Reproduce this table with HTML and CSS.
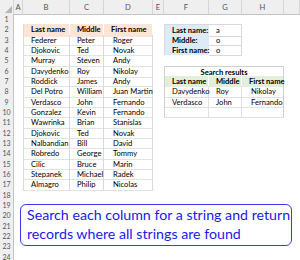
FILE: index.html
```html
<!DOCTYPE html>
<html>
<head>
<meta charset="utf-8">
<link rel="stylesheet" href="styles.css">
</head>
<body>
<div class="sheet">
  <div class="row hdr">
    <span class="corner"><svg width="7" height="7" viewBox="0 0 7 7"><path d="M7 0V7H0Z" fill="#b4b4b4"/></svg></span>
    <span>A</span><span>B</span><span>C</span><span>D</span><span>E</span><span>F</span><span>G</span><span>H</span><span></span>
  </div>
  <div class="row"><span class="rn">1</span><span></span><span></span><span></span><span></span><span></span><span></span><span></span><span></span><span></span></div>
  <div class="row"><span class="rn">2</span><span></span><span class="th first">Last name</span><span class="th">Middle</span><span class="th">First name</span><span></span><span class="lk-l top">Last name:</span><span class="lk-v top">a</span><span></span><span></span></div>
  <div class="row"><span class="rn">3</span><span></span><span class="td first">Federer</span><span class="td">Peter</span><span class="td fn">Roger</span><span></span><span class="lk-l">Middle:</span><span class="lk-v">o</span><span></span><span></span></div>
  <div class="row"><span class="rn">4</span><span></span><span class="td first">Djokovic</span><span class="td">Ted</span><span class="td fn">Novak</span><span></span><span class="lk-l">First name:</span><span class="lk-v">o</span><span></span><span></span></div>
  <div class="row"><span class="rn">5</span><span></span><span class="td first">Murray</span><span class="td">Steven</span><span class="td fn">Andy</span><span></span><span></span><span></span><span></span><span></span></div>
  <div class="row"><span class="rn">6</span><span></span><span class="td first">Davydenko</span><span class="td">Roy</span><span class="td fn">Nikolay</span><span></span><span class="sr-title">Search results</span><span></span></div>
  <div class="row"><span class="rn">7</span><span></span><span class="td first">Roddick</span><span class="td">James</span><span class="td fn">Andy</span><span></span><span class="sr-h first">Last name</span><span class="sr-h">Middle</span><span class="sr-h last">First name</span><span></span></div>
  <div class="row"><span class="rn">8</span><span></span><span class="td first">Del Potro</span><span class="td">William</span><span class="td fn">Juan Martin</span><span></span><span class="sr-d first">Davydenko</span><span class="sr-d">Roy</span><span class="sr-d last fn">Nikolay</span><span></span></div>
  <div class="row"><span class="rn">9</span><span></span><span class="td first">Verdasco</span><span class="td">John</span><span class="td fn">Fernando</span><span></span><span class="sr-d first">Verdasco</span><span class="sr-d">John</span><span class="sr-d last fn">Fernando</span><span></span></div>
  <div class="row"><span class="rn">10</span><span></span><span class="td first">Gonzalez</span><span class="td">Kevin</span><span class="td fn">Fernando</span><span></span><span class="sr-d first"></span><span class="sr-d"></span><span class="sr-d last"></span><span></span></div>
  <div class="row"><span class="rn">11</span><span></span><span class="td first">Wawrinka</span><span class="td">Brian</span><span class="td fn">Stanislas</span><span></span><span></span><span></span><span></span><span></span></div>
  <div class="row"><span class="rn">12</span><span></span><span class="td first">Djokovic</span><span class="td">Ted</span><span class="td fn">Novak</span><span></span><span></span><span></span><span></span><span></span></div>
  <div class="row"><span class="rn">13</span><span></span><span class="td first">Nalbandian</span><span class="td">Bill</span><span class="td fn">David</span><span></span><span></span><span></span><span></span><span></span></div>
  <div class="row"><span class="rn">14</span><span></span><span class="td first">Robredo</span><span class="td">George</span><span class="td fn">Tommy</span><span></span><span></span><span></span><span></span><span></span></div>
  <div class="row"><span class="rn">15</span><span></span><span class="td first">Cilic</span><span class="td">Bruce</span><span class="td fn">Marin</span><span></span><span></span><span></span><span></span><span></span></div>
  <div class="row"><span class="rn">16</span><span></span><span class="td first">Stepanek</span><span class="td">Michael</span><span class="td fn">Radek</span><span></span><span></span><span></span><span></span><span></span></div>
  <div class="row"><span class="rn">17</span><span></span><span class="td first">Almagro</span><span class="td">Philip</span><span class="td fn">Nicolas</span><span></span><span></span><span></span><span></span><span></span></div>
  <div class="row"><span class="rn">18</span><span></span><span></span><span></span><span></span><span></span><span></span><span></span><span></span><span></span></div>
  <div class="row"><span class="rn">19</span><span></span><span></span><span></span><span></span><span></span><span></span><span></span><span></span><span></span></div>
  <div class="row"><span class="rn">20</span><span></span><span></span><span></span><span></span><span></span><span></span><span></span><span></span><span></span></div>
  <div class="row"><span class="rn">21</span><span></span><span></span><span></span><span></span><span></span><span></span><span></span><span></span><span></span></div>
  <div class="row"><span class="rn">22</span><span></span><span></span><span></span><span></span><span></span><span></span><span></span><span></span><span></span></div>
  <div class="row"><span class="rn">23</span><span></span><span></span><span></span><span></span><span></span><span></span><span></span><span></span><span></span></div>
  <div class="row"><span class="rn">24</span><span></span><span></span><span></span><span></span><span></span><span></span><span></span><span></span><span></span></div>
</div>
<div class="note">Search each column for a string and return<br>records where all strings are found</div>
</body>
</html>
```
FILE: styles.css
```css
* { box-sizing: border-box; margin: 0; padding: 0; }
body {
  margin: 0;
  width: 300px;
  height: 260px;
  overflow: hidden;
  background: #fff;
  position: relative;
  font-family: Lato, "Open Sans", sans-serif;
  font-size: 7.6px;
  color: #000;
}
.sheet { display: flex; flex-direction: column; }
.row {
  display: grid;
  grid-template-columns: 14px 9px 47px 34px 49px 11px 45px 33px 42px 16px;
  height: 10.33px;
  line-height: 10.33px;
}
.row > span { white-space: nowrap; overflow: visible; padding-left: 7px; }
.hdr { height: 14px; line-height: 14px; }
.hdr > span {
  background: #efefef;
  color: #555;
  text-align: center;
  padding-left: 0;
  border-right: 1px solid #d6d6d6;
  border-bottom: 1px solid #c4c4c4;
  font-size: 7.6px;
}
.hdr > .corner { display: flex; align-items: flex-end; justify-content: flex-end; padding: 0 1px 1px 0; }
.row > .rn {
  background: #efefef;
  color: #555;
  text-align: center;
  padding-left: 0;
  border-right: 1px solid #c4c4c4;
  border-bottom: 1px solid #dadada;
  font-size: 7px;
}
.th { background: #fce4d6; font-weight: 700; border-right: 1px solid #fff; }
.td { border-right: 1px solid #d9d9d9; border-bottom: 1px solid #e3e3e3; }
.td.first, .th.first { border-left: 1px solid #d9d9d9; }
.row > .fn { padding-left: 9px; }
.lk-l { background: #ddebf7; font-weight: 700; border-bottom: 1px solid #fff; border-left: 1px solid #d9d9d9; }
.lk-v { border-right: 1px solid #d9d9d9; border-bottom: 1px solid #d9d9d9; }
.lk-l.top, .lk-v.top { border-top: 1px solid #d9d9d9; }
.row > .sr-title {
  grid-column: span 3;
  text-align: center;
  padding-left: 0;
  font-weight: 700;
  border: 1px solid #d0d0d0;
}
.sr-h { background: #e2efda; font-weight: 700; border-right: 1px solid #fff; }
.sr-h.first, .sr-d.first { border-left: 1px solid #d0d0d0; }
.sr-h.last, .sr-d.last { border-right: 1px solid #d0d0d0; }
.sr-d { border-right: 1px solid #e0e0e0; border-bottom: 1px solid #e0e0e0; }
.note {
  position: absolute;
  left: 20px;
  top: 204px;
  width: 272px;
  height: 42px;
  border: 1.5px solid #3a3af2;
  border-radius: 6px;
  background: #fff;
  color: #1a1aee;
  font-family: Lato, "Open Sans", sans-serif;
  font-size: 14.2px;
  line-height: 18.5px;
  padding: 1px 0 0 6px;
  white-space: nowrap;
}
```
